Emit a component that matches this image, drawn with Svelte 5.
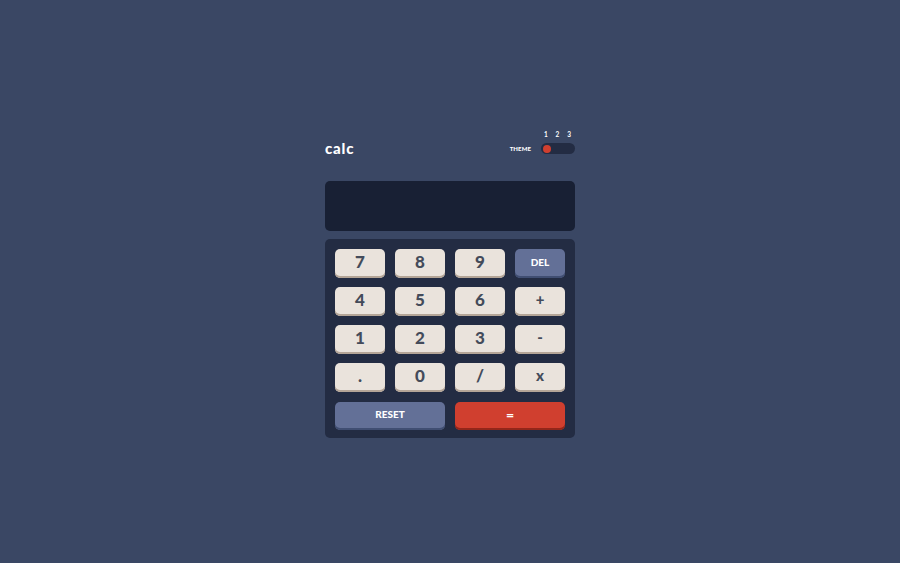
<script>
  const keys = ['7', '8', '9', 'DEL', '4', '5', '6', '+', '1', '2', '3', '-', '.', '0', '/', 'x'];
</script>

<main class="page">
  <div class="calc">
    <header class="top">
      <span class="logo">calc</span>
      <div class="theme">
        <span class="theme-label">THEME</span>
        <div class="switch">
          <div class="nums">
            <span>1</span>
            <span>2</span>
            <span>3</span>
          </div>
          <div class="track">
            <span class="knob"></span>
          </div>
        </div>
      </div>
    </header>

    <div class="screen"></div>

    <div class="keypad">
      {#each keys as key}
        <button class="key" class:del={key === 'DEL'} class:op={key === '+' || key === '-' || key === 'x'}>{key}</button>
      {/each}
      <button class="key reset">RESET</button>
      <button class="key equals">=</button>
    </div>
  </div>
</main>

<style>
  :global(body) {
    margin: 0;
    background: #3a4764;
  }

  .page {
    height: 563px;
    display: flex;
    justify-content: center;
    font-family: "Lato", "Open Sans", sans-serif;
  }

  .calc {
    width: 250px;
    padding-top: 130px;
  }

  .top {
    height: 24px;
    display: flex;
    justify-content: space-between;
    align-items: flex-end;
    margin-bottom: 27px;
  }

  .logo {
    color: #fff;
    font-size: 15px;
    font-weight: 900;
    letter-spacing: 0.8px;
    line-height: 20px;
    margin-bottom: -4px;
  }

  .theme {
    display: flex;
    align-items: flex-end;
    gap: 10px;
  }

  .theme-label {
    color: #fff;
    font-size: 6px;
    font-weight: 900;
    letter-spacing: 0.1px;
    line-height: 11px;
  }

  .switch {
    width: 34px;
  }

  .nums {
    display: flex;
    justify-content: space-between;
    padding: 0 4px 0 3px;
    color: #fff;
    font-size: 6.5px;
    font-weight: 700;
    line-height: 9px;
    margin-bottom: 4px;
  }

  .track {
    height: 11px;
    background: #232c43;
    border-radius: 6px;
    display: flex;
    align-items: center;
    padding: 0 1.5px;
  }

  .knob {
    width: 8px;
    height: 8px;
    background: #d03f2f;
    border-radius: 50%;
  }

  .screen {
    height: 50px;
    background: #182034;
    border-radius: 5px;
    margin-bottom: 8px;
  }

  .keypad {
    display: grid;
    grid-template-columns: repeat(4, 50px);
    gap: 9px 10px;
    padding: 10px 10px 8px;
    background: #232c43;
    border-radius: 5px;
  }

  .key {
    height: 29px;
    padding: 0 0 5px;
    border: none;
    border-radius: 5px;
    background: #eae3dc;
    box-shadow: inset 0 -2px 0 #b4a597;
    color: #444b5a;
    font-family: inherit;
    font-size: 17px;
    font-weight: 900;
    line-height: 1;
  }

  .op {
    font-size: 15px;
  }

  .del,
  .reset {
    background: #637097;
    box-shadow: inset 0 -2px 0 #404e72;
    color: #fff;
    font-size: 10px;
    padding-bottom: 3px;
  }

  .reset {
    grid-column: span 2;
    height: 28px;
    margin-top: 1px;
    padding-bottom: 5px;
  }

  .equals {
    grid-column: span 2;
    height: 28px;
    margin-top: 1px;
    padding-bottom: 3px;
    background: #d03f2f;
    box-shadow: inset 0 -2px 0 #93261a;
    color: #fff;
    font-size: 14px;
  }
</style>
